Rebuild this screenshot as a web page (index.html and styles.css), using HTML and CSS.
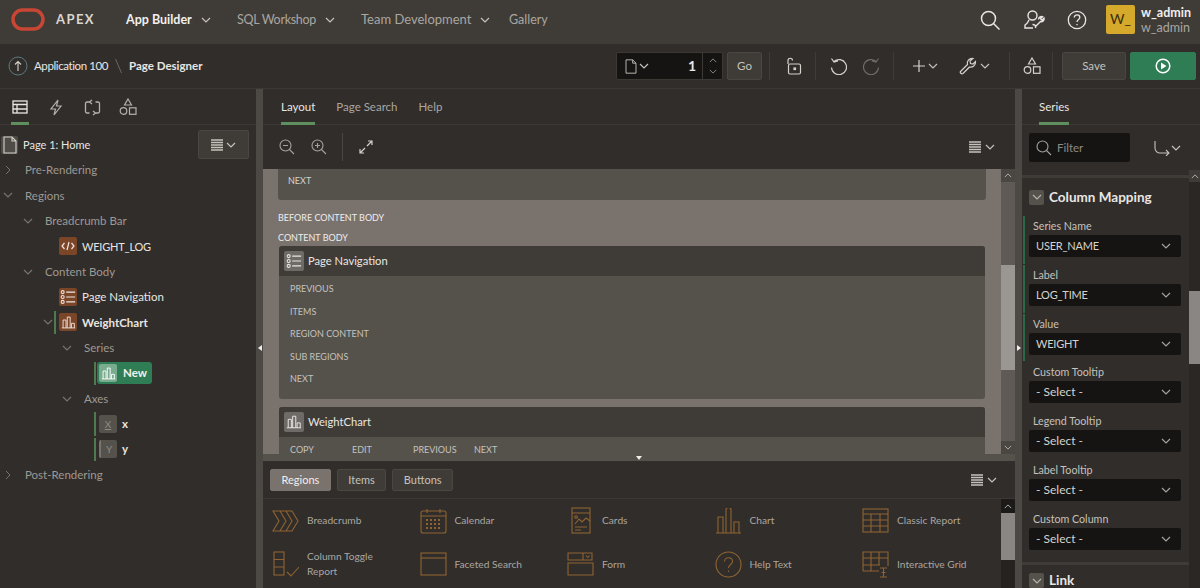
FILE: index.html
```html
<!DOCTYPE html>
<html lang="en">
<head>
<meta charset="utf-8">
<title>Page Designer</title>
<link rel="stylesheet" href="styles.css">
</head>
<body>
<svg class="defs" width="0" height="0">
  <symbol id="chev" viewBox="0 0 10 6"><path d="M1 1l4 4 4-4" fill="none" stroke="currentColor" stroke-width="1.2"/></symbol>
  <symbol id="menu" viewBox="0 0 12 12"><path d="M0 1h12M0 3.500h12M0 6h12M0 8.500h12M0 11h12" fill="none" stroke="currentColor" stroke-width="1.3"/></symbol>
  <symbol id="shapes" viewBox="0 0 18 18" fill="none" stroke="currentColor" stroke-width="1.2"><path d="M9 1l3.500 6h-7z"/><circle cx="4.500" cy="13" r="3.300"/><rect x="10.500" y="9.800" width="6.500" height="6.500"/></symbol>
  <symbol id="bars" viewBox="0 0 18 18" fill="none" stroke="currentColor" stroke-width="1.1"><path d="M1 15.500h16M2.500 15.500V6h3.500v9.500M7.500 15.500V2.500h3.500v13M12.500 15.500V10h3.500v5.500"/></symbol>
  <symbol id="list" viewBox="0 0 18 18" fill="none" stroke="currentColor" stroke-width="1.2"><circle cx="3" cy="3.500" r="1.700"/><circle cx="3" cy="9" r="1.700"/><circle cx="3" cy="14.500" r="1.700"/><path d="M7 3.500h10M7 9h10M7 14.500h10"/></symbol>
  <symbol id="doc" viewBox="0 0 14 18" fill="none" stroke="currentColor" stroke-width="1.1"><path d="M1 1h8l4 4v12H1zM9 1v4h4"/></symbol>
</svg>

<header class="topbar">
  <svg class="logo" width="34" height="23" viewBox="0 0 34 23"><rect x="2" y="2" width="30" height="19" rx="9.500" fill="none" stroke="#c74634" stroke-width="3.500"/></svg>
  <span class="brand">APEX</span>
  <nav class="mainnav">
    <a class="nav-item nav-active nav-app">App Builder<svg class="chev" width="10" height="6"><use href="#chev"/></svg></a>
    <a class="nav-item nav-sql">SQL Workshop<svg class="chev" width="10" height="6"><use href="#chev"/></svg></a>
    <a class="nav-item nav-team">Team Development<svg class="chev" width="10" height="6"><use href="#chev"/></svg></a>
    <a class="nav-item">Gallery</a>
  </nav>
  <div class="top-actions">
    <svg width="22" height="22" viewBox="0 0 22 22" fill="none" stroke="#e8e6e3" stroke-width="1.500"><circle cx="9.500" cy="9.500" r="7"/><path d="M14.500 14.500l6 6"/></svg>
    <svg width="22" height="22" viewBox="0 0 22 22" fill="none" stroke="#e8e6e3" stroke-width="1.400"><circle cx="9.500" cy="6.500" r="4.500"/><path d="M6 11c-1 1.500-1 3-4 5v3h8M12 18l6-6M15.500 10.500c0-2 2-3.500 4-2.800l-2 2 1.500 1.500 2-2c.5 2-1.500 4-3.500 3.500M9.500 15.500c2 0 3.500 1 3 3.500"/></svg>
    <svg width="20" height="20" viewBox="0 0 20 20" fill="none" stroke="#e8e6e3" stroke-width="1.300"><circle cx="10" cy="10" r="8.700"/><path d="M7.300 7.500c0-3.500 5.500-3.500 5.500 0 0 2-2.800 2-2.800 4.500M10 14v1.300"/></svg>
  </div>
  <div class="avatar">W_</div>
  <div class="user"><b>w_admin</b><span>w_admin</span></div>
</header>

<div class="toolbar">
  <svg class="up" width="20" height="20" viewBox="0 0 20 20" fill="none"><circle cx="10" cy="10" r="9" stroke="#5d7a80"/><path d="M10 15V6M7 8.500L10 5.500l3 3" stroke="#d5d2cc" stroke-width="1.100"/></svg>
  <span class="crumb">Application 100</span>
  <svg class="crumb-sep" width="7" height="16"><path d="M0.500 1l6 14" stroke="#6c6864"/></svg>
  <b class="crumb-cur">Page Designer</b>
  <div class="page-box">
    <svg class="pg-doc" width="12" height="15"><use href="#doc"/></svg>
    <svg class="chev" width="10" height="6"><use href="#chev"/></svg>
    <span class="pg-num">1</span>
    <div class="stepper">
      <svg width="8" height="5" class="flip"><use href="#chev"/></svg>
      <svg width="8" height="5"><use href="#chev"/></svg>
    </div>
  </div>
  <button class="btn btn-go">Go</button>
  <i class="vsep sep-a"></i>
  <svg class="t-lock" width="18" height="18" viewBox="0 0 18 18" fill="none" stroke="#d5d2cc" stroke-width="1.200"><rect x="4.500" y="7" width="12" height="10" rx="1.500"/><path d="M4 7V3.500c0-3 4.500-3 4.500 0"/><rect x="10" y="11" width="1.500" height="1.500" fill="#d5d2cc"/></svg>
  <i class="vsep sep-b"></i>
  <svg class="t-undo" width="17" height="18" viewBox="0 0 17 18" fill="none" stroke="#d5d2cc" stroke-width="1.200"><path d="M4 4.500a7.500 7.500 0 1 1-2.500 6M1.500 1.500l2.500 3.500 4-1"/></svg>
  <svg class="t-redo" width="17" height="18" viewBox="0 0 17 18" fill="none" stroke="#6f6b66" stroke-width="1.200"><path d="M13 4.500a7.500 7.500 0 1 0 2.500 6M15.500 1.500L13 5 9 4"/></svg>
  <i class="vsep sep-c"></i>
  <svg class="t-plus" width="12" height="12"><path d="M6 0v12M0 6h12" stroke="#d5d2cc" stroke-width="1.200"/></svg>
  <svg class="chev" width="10" height="6"><use href="#chev"/></svg>
  <svg class="t-wrench" width="18" height="18" viewBox="0 0 18 18" fill="none" stroke="#d5d2cc" stroke-width="1.200"><path d="M1.500 14.500l7-7c-1-3 1.500-6.500 5.500-6l-3 2.500.5 2.500 2.500.5 2.500-2.500c.5 4-3 6-6 5.500l-6.500 6.500c-1.500 1-3.500-1-2.500-2z"/></svg>
  <svg class="chev" width="10" height="6"><use href="#chev"/></svg>
  <i class="vsep sep-d"></i>
  <svg class="t-shapes" width="18" height="18" color="#d5d2cc"><use href="#shapes"/></svg>
  <i class="vsep sep-e"></i>
  <button class="btn btn-save">Save</button>
  <button class="btn btn-run"><svg width="16" height="16" viewBox="0 0 16 16"><circle cx="8" cy="8" r="6.800" fill="none" stroke="#fff" stroke-width="1.500"/><path d="M6 4.500l5.500 3.500L6 11.500z" fill="#fff"/></svg></button>
</div>

<main class="workspace">
  <aside class="left">
    <div class="tabs left-tabs">
      <span class="icon-tab active"><svg width="18" height="16" viewBox="0 0 18 16" fill="none" stroke="#e8e6e3" stroke-width="1.300"><rect x="2" y="2" width="14" height="12"/><path d="M2 5.500h14M2 10h14M6 5.500V14"/></svg></span>
      <span class="icon-tab"><svg width="14" height="17" viewBox="0 0 14 17" fill="none" stroke="#b5b1ac" stroke-width="1.200"><path d="M9 1L2 10h4.500L5 16l7-9H7.500z"/></svg></span>
      <span class="icon-tab"><svg width="17" height="17" viewBox="0 0 17 17" fill="none" stroke="#b5b1ac" stroke-width="1.300"><path d="M5.500 14H3a1.500 1.500 0 0 1-1.500-1.500v-8A1.500 1.500 0 0 1 3 3h3M11.500 3H14a1.500 1.500 0 0 1 1.500 1.500v8A1.500 1.500 0 0 1 14 14h-3M8 1l-2.500 2L8 5M9 12l2.500 2L9 16"/></svg></span>
      <span class="icon-tab"><svg width="18" height="18" color="#b5b1ac"><use href="#shapes"/></svg></span>
    </div>
    <div class="tree">
      <div class="row row-page"><span class="pg-ico"><svg width="14" height="18" color="#d5d2cc"><use href="#doc"/></svg></span><span class="t-root">Page 1: Home</span>
        <button class="btn menu-btn"><svg width="12" height="12"><use href="#menu"/></svg><svg class="chev" width="10" height="6"><use href="#chev"/></svg></button></div>
      <div class="row l0"><svg class="tog" width="6" height="10" viewBox="0 0 6 10"><path d="M1 1l4 4-4 4" fill="none" stroke="currentColor"/></svg><span>Pre-Rendering</span></div>
      <div class="row l0"><svg class="tog" width="10" height="6"><use href="#chev"/></svg><span>Regions</span></div>
      <div class="row l1"><svg class="tog" width="10" height="6"><use href="#chev"/></svg><span>Breadcrumb Bar</span></div>
      <div class="row l2"><span class="node"><svg width="14" height="10" viewBox="0 0 14 10" fill="none" stroke="#f0e6df" stroke-width="1.200"><path d="M3.500 2L1 5l2.500 3M10.500 2L13 5l-2.500 3M8 1L6 9"/></svg></span><span class="lit caps">WEIGHT_LOG</span></div>
      <div class="row l1"><svg class="tog" width="10" height="6"><use href="#chev"/></svg><span>Content Body</span></div>
      <div class="row l2"><span class="node"><svg width="16" height="16" color="#f0e6df"><use href="#list"/></svg></span><span class="lit">Page Navigation</span></div>
      <div class="row l2 mark-a"><i class="mark"></i><svg class="tog" width="10" height="6"><use href="#chev"/></svg><span class="node"><svg width="15" height="15" color="#f0e6df"><use href="#bars"/></svg></span><b class="lit">WeightChart</b></div>
      <div class="row l3"><svg class="tog" width="10" height="6"><use href="#chev"/></svg><span>Series</span></div>
      <div class="row l4"><i class="mark"></i><span class="pill"><span class="node node-new"><svg width="15" height="15" color="#fff"><use href="#bars"/></svg></span><b>New</b></span></div>
      <div class="row l3"><svg class="tog" width="10" height="6"><use href="#chev"/></svg><span>Axes</span></div>
      <div class="row l4"><i class="mark"></i><span class="node node-grey axis-x">X</span><b class="lit">x</b></div>
      <div class="row l4"><i class="mark"></i><span class="node node-grey axis-y">Y</span><b class="lit">y</b></div>
      <div class="row l0"><svg class="tog" width="6" height="10" viewBox="0 0 6 10"><path d="M1 1l4 4-4 4" fill="none" stroke="currentColor"/></svg><span>Post-Rendering</span></div>
    </div>
  </aside>
  <div class="split"><i class="arrow-l"></i></div>

  <section class="center">
    <div class="tabs center-tabs">
      <span class="tab active">Layout</span><span class="tab">Page Search</span><span class="tab">Help</span>
    </div>
    <div class="center-tools">
      <svg width="16" height="16" viewBox="0 0 16 16" fill="none" stroke="#a5a19c" stroke-width="1.100"><circle cx="6.500" cy="6.500" r="5.500"/><path d="M10.500 10.500L15 15M4 6.500h5"/></svg>
      <svg class="zoom-in" width="16" height="16" viewBox="0 0 16 16" fill="none" stroke="#a5a19c" stroke-width="1.100"><circle cx="6.500" cy="6.500" r="5.500"/><path d="M10.500 10.500L15 15M4 6.500h5M6.500 4v5"/></svg>
      <i class="tool-sep"></i>
      <svg width="14" height="14" viewBox="0 0 14 14" fill="none" stroke="#d5d2cc" stroke-width="1.200"><path d="M8 6l5-5M9 1h4v4M6 8l-5 5M1 9v4h4"/></svg>
      <span class="menu-ico"><svg width="12" height="12"><use href="#menu"/></svg><svg class="chev" width="10" height="6"><use href="#chev"/></svg></span>
    </div>
    <div class="canvas-wrap">
      <div class="canvas">
        <div class="reg reg-top"><p class="slot">NEXT</p></div>
        <p class="slot-label">BEFORE CONTENT BODY</p>
        <p class="slot-label">CONTENT BODY</p>
        <div class="reg reg-nav">
          <div class="reg-head"><span class="reg-ico"><svg width="16" height="16" color="#e8e6e3"><use href="#list"/></svg></span>Page Navigation</div>
          <div class="reg-body">
            <p class="s1">PREVIOUS</p><p>ITEMS</p><p>REGION CONTENT</p><p>SUB REGIONS</p><p>NEXT</p>
          </div>
        </div>
        <div class="reg reg-chart">
          <div class="reg-head"><span class="reg-ico"><svg width="16" height="16" color="#e8e6e3"><use href="#bars"/></svg></span>WeightChart</div>
          <div class="reg-buttons"><span class="b1">COPY</span><span class="b2">EDIT</span><span class="b3">PREVIOUS</span><span>NEXT</span></div>
        </div>
      </div>
      <div class="vbar vbar-canvas">
        <span class="vbtn"><svg class="flip" width="8" height="5"><use href="#chev"/></svg></span>
        <span class="vthumb"></span>
        <span class="vfill"></span>
        <span class="vbtn"><svg width="8" height="5"><use href="#chev"/></svg></span>
      </div>
    </div>
    <div class="hsplit"><i class="arrow-d"></i></div>
    <div class="gallery">
      <div class="gal-tabs">
        <button class="gbtn on">Regions</button><button class="gbtn">Items</button><button class="gbtn">Buttons</button>
        <span class="menu-ico"><svg width="12" height="12"><use href="#menu"/></svg><svg class="chev" width="10" height="6"><use href="#chev"/></svg></span>
      </div>
      <div class="gal-body">
        <div class="gal-grid">
          <div class="gi"><svg width="27" height="24" viewBox="0 0 27 24" class="gi-ico"><path d="M1 2h19l6 10-6 10H1l6-10zM8 2l6 10-6 10M14 2l6 10-6 10"/></svg><span>Breadcrumb</span></div>
          <div class="gi"><svg width="27" height="26" viewBox="0 0 27 26" class="gi-ico"><rect x="1" y="3" width="25" height="22" rx="2"/><path d="M1 8h25M7 1v4M20 1v4"/><path class="dots" d="M6 12h15M6 16h15M6 20h15"/></svg><span>Calendar</span></div>
          <div class="gi"><svg width="27" height="27" viewBox="0 0 27 27" class="gi-ico"><rect x="5" y="1" width="18" height="25"/><path d="M5 6h18M8 17l4-5 3 3 4-4 4 3M8 20h12M8 23h6"/><circle cx="9" cy="10" r="1.300"/></svg><span>Cards</span></div>
          <div class="gi"><svg width="27" height="26" viewBox="0 0 27 26" class="gi-ico"><path d="M1 25h25M3 25V9h5v16M11 25V2a2 2 0 0 1 5 0v23M19 25V14h5v11"/></svg><span>Chart</span></div>
          <div class="gi"><svg width="27" height="25" viewBox="0 0 27 25" class="gi-ico"><rect x="1" y="1" width="25" height="23"/><path d="M1 6h25M1 12h25M1 18h25M9 6v18M18 6v18"/></svg><span>Classic Report</span></div>
          <div class="gi"><svg width="27" height="26" viewBox="0 0 27 26" class="gi-ico"><rect x="2" y="1" width="10" height="23"/><path d="M2 8.500h10M2 16h10M15 21l4 4 8-9"/></svg><span>Column Toggle Report</span></div>
          <div class="gi"><svg width="27" height="24" viewBox="0 0 27 24" class="gi-ico"><rect x="1" y="1" width="25" height="22"/><path d="M1 6h25"/></svg><span>Faceted Search</span></div>
          <div class="gi"><svg width="27" height="24" viewBox="0 0 27 24" class="gi-ico"><path d="M1 1h15v7H1zM16 1h9v7h-9zM1 11h25v12H1zM19 3.500l1.800 2 1.800-2"/></svg><span>Form</span></div>
          <div class="gi"><svg width="27" height="27" viewBox="0 0 27 27" class="gi-ico"><circle cx="13.500" cy="13.500" r="12.500"/><path d="M9.500 10.500c0-5 8-5 8 0 0 3-4 3-4 6.500M13.500 19.500v1.500"/></svg><span>Help Text</span></div>
          <div class="gi"><svg width="27" height="27" viewBox="0 0 27 27" class="gi-ico"><path d="M1 20V1h25v14M1 7h25M1 14h17M1 20h16M9 1v19M17 1v13M18 17h7M18 26h7M21.500 17v9M19.500 21.500h4"/></svg><span>Interactive Grid</span></div>
        </div>
        <div class="vbar vbar-gal">
          <span class="vbtn"><svg class="flip" width="8" height="5"><use href="#chev"/></svg></span>
          <span class="vthumb"></span>
        </div>
      </div>
    </div>
  </section>
  <div class="split split-r"><i class="arrow-r"></i></div>

  <aside class="right">
    <div class="tabs right-tabs"><span class="tab active">Series</span></div>
    <div class="right-tools">
      <div class="filter"><svg width="16" height="16" viewBox="0 0 16 16" fill="none" stroke="#a5a19c" stroke-width="1.100"><circle cx="6.500" cy="6.500" r="5.500"/><path d="M10.500 10.500L15 15"/></svg><span>Filter</span></div>
      <span class="goto"><svg width="16" height="16" viewBox="0 0 16 16" fill="none" stroke="#c5c1bc" stroke-width="1.100"><path d="M1 1v7a5 5 0 0 0 5 5h9M12 10l3 3-3 3"/></svg><svg class="chev" width="10" height="6"><use href="#chev"/></svg></span>
    </div>
    <div class="props-wrap">
      <div class="props">
        <div class="group-head"><span class="collapse"><svg width="10" height="6"><use href="#chev"/></svg></span>Column Mapping</div>
        <div class="field req"><label>Series Name</label><div class="sel"><span class="caps">USER_NAME</span><svg width="10" height="6"><use href="#chev"/></svg></div></div>
        <div class="field req"><label>Label</label><div class="sel"><span class="caps">LOG_TIME</span><svg width="10" height="6"><use href="#chev"/></svg></div></div>
        <div class="field req"><label>Value</label><div class="sel"><span class="caps">WEIGHT</span><svg width="10" height="6"><use href="#chev"/></svg></div></div>
        <div class="field"><label>Custom Tooltip</label><div class="sel">- Select -<svg width="10" height="6"><use href="#chev"/></svg></div></div>
        <div class="field"><label>Legend Tooltip</label><div class="sel">- Select -<svg width="10" height="6"><use href="#chev"/></svg></div></div>
        <div class="field"><label>Label Tooltip</label><div class="sel">- Select -<svg width="10" height="6"><use href="#chev"/></svg></div></div>
        <div class="field"><label>Custom Column</label><div class="sel">- Select -<svg width="10" height="6"><use href="#chev"/></svg></div></div>
        <div class="group-head group-link"><span class="collapse"><svg width="10" height="6"><use href="#chev"/></svg></span>Link</div>
      </div>
      <div class="vbar vbar-props">
        <span class="vbtn"><svg class="flip" width="8" height="5"><use href="#chev"/></svg></span>
        <span class="vthumb"></span>
      </div>
    </div>
  </aside>
</main>
</body>
</html>
```

FILE: styles.css
```css
* { box-sizing: border-box; }
html, body { margin: 0; height: 100%; overflow: hidden; }
body {
  display: flex; flex-direction: column; height: 588px;
  background: #312d2a; color: #d5d2cc;
  font: 11.500px/1.2 Lato, "Noto Sans", sans-serif;
}
p { margin: 0; }
i { display: block; font-style: normal; }
button { font: inherit; cursor: default; }
.defs { position: absolute; }
.flip { transform: scaleY(-1); }
.chev { color: #c5c1bc; flex: none; }
.caps { font-size: 11px; letter-spacing: -.2px; }

/* top bar */
.topbar { height: 44px; flex: none; display: flex; align-items: center; background: #3f3c37; padding: 0 0 5px 11px; }
.logo { flex: none; }
.brand { margin-left: 11px; width: 70px; font-size: 13px; font-weight: 700; letter-spacing: 1.4px; color: #d9d6d2; }
.mainnav { display: flex; font-size: 12.500px; color: #aaa6a1; }
.nav-item { display: flex; align-items: center; gap: 9px; white-space: nowrap; }
.nav-app { width: 111px; }
.nav-sql { width: 124px; letter-spacing: -.3px; }
.nav-team { width: 148px; font-size: 13px; }
.nav-active { color: #f2f0ee; font-weight: 700; }
.top-actions { margin-left: auto; display: flex; align-items: center; gap: 22px; }
.avatar { width: 29px; height: 29px; flex: none; margin-left: 19px; background: #d4a92c; color: #3a2c08; border-radius: 2px; font-size: 14px; display: flex; align-items: center; justify-content: center; }
.user { width: 59px; flex: none; margin-left: 6px; display: flex; flex-direction: column; font-size: 12.500px; line-height: 15px; }
.user b { color: #f0eeec; }
.user span { color: #aaa6a1; }

/* toolbar */
.toolbar { height: 45px; flex: none; display: flex; align-items: center; padding: 0 4px 0 8px; background: #312d2a; border-bottom: 1px solid #3c3935; white-space: nowrap; }
.toolbar > * { flex: none; }
.crumb { margin-left: 6px; color: #e8e6e3; letter-spacing: -.4px; }
.crumb-sep { margin-left: 7px; }
.crumb-cur { margin-left: 7px; color: #e8e6e3; font-size: 11.500px; }
.page-box { margin-left: auto; width: 107px; height: 28px; background: #161412; border: 1px solid #3c3935; border-radius: 2px; display: flex; align-items: center; padding-left: 8px; }
.pg-doc { color: #c5c1bc; margin-right: 2px; }
.pg-num { margin-left: auto; margin-right: 6px; font-size: 14px; color: #e8e6e3; font-weight: 700; }
.stepper { width: 20px; height: 100%; border-left: 1px solid #3c3935; display: flex; flex-direction: column; align-items: center; justify-content: center; gap: 6px; color: #8d8984; }
.btn { background: #3f3c37; border: 1px solid #4a4742; border-radius: 2px; color: #c5c1bc; height: 28px; padding: 0; font-size: 11.500px; }
.btn-go { width: 35px; margin-left: 4px; }
.vsep { width: 1px; height: 28px; background: #3f3c37; }
.sep-a { margin-left: 7px; }
.t-lock { margin-left: 14px; }
.sep-b { margin-left: 13px; }
.t-undo { margin-left: 14px; }
.t-redo { margin-left: 16px; }
.sep-c { margin-left: 13px; }
.t-plus { margin-left: 19px; }
.t-plus + .chev { margin-left: 3px; }
.t-wrench { margin-left: 21px; }
.t-wrench + .chev { margin-left: 3px; }
.sep-d { margin-left: 19px; }
.t-shapes { margin-left: 13px; }
.sep-e { margin-left: 11px; }
.btn-save { width: 64px; margin-left: 9px; }
.btn-run { width: 66px; margin-left: 4px; background: #2f7d55; border-color: #2f7d55; display: flex; align-items: center; justify-content: center; }

/* layout */
.workspace { flex: 1; min-height: 0; display: flex; }
.left { width: 256px; flex: none; display: flex; flex-direction: column; }
.split { width: 7px; flex: none; background: #4c4944; display: flex; align-items: center; justify-content: center; padding-top: 19px; }
.arrow-l { border: 3px solid transparent; border-left: 0; border-right: 4px solid #f0eeec; }
.arrow-r { border: 3px solid transparent; border-right: 0; border-left: 4px solid #f0eeec; }
.center { width: 752px; flex: none; display: flex; flex-direction: column; min-height: 0; }
.right { flex: 1; min-width: 0; display: flex; flex-direction: column; }

/* tabs */
.tabs { height: 36px; flex: none; display: flex; border-bottom: 1px solid #3c3935; }
.left-tabs { gap: 18px; padding-left: 11px; }
.icon-tab { width: 18px; height: 36px; display: flex; align-items: center; justify-content: center; }
.icon-tab.active { border-bottom: 3px solid #5f8f5f; padding-top: 3px; }
.center-tabs { gap: 21px; padding-left: 18px; }
.right-tabs { padding-left: 17px; }
.tab { height: 36px; display: flex; align-items: center; color: #aaa6a1; }
.tab.active { color: #e8e6e3; border-bottom: 3px solid #5f8f5f; padding-top: 3px; }

/* tree */
.tree { padding-top: 7px; color: #9d9994; }
.row { height: 25.400px; display: flex; align-items: center; position: relative; white-space: nowrap; }
.row-page { padding-left: 1px; }
.pg-ico { width: 17px; height: 18px; background: #4f4c47; border-radius: 2px; display: flex; justify-content: center; align-items: center; }
.t-root { margin-left: 5px; color: #e8e6e3; font-size: 11px; }
.menu-btn { margin-left: auto; margin-right: 7px; width: 51px; display: flex; align-items: center; justify-content: center; gap: 3px; height: 29px; color: #c5c1bc; }
.tog { flex: none; color: #77736e; }
.l0 { padding-left: 3px; }
.l0 .tog { width: 10px; }
.l0 > span { margin-left: 12px; }
.l1 { padding-left: 23px; }
.l1 > span { margin-left: 12px; }
.l2 { padding-left: 59px; }
.l3 { padding-left: 62px; }
.l3 > span { margin-left: 12px; }
.l4 { padding-left: 99px; }
.mark-a .tog { position: absolute; left: 43px; }
.mark { position: absolute; top: 1px; bottom: 1px; left: 94px; width: 2px; background: #4f7a4f; }
.mark-a .mark { left: 54px; }
.node { width: 18px; height: 18px; flex: none; border-radius: 2px; background: #7b4528; display: flex; align-items: center; justify-content: center; }
.lit { margin-left: 5px; color: #e8e6e3; }
.pill { margin-left: -2px; height: 22px; width: 55px; background: #2f7d55; border-radius: 3px; display: flex; align-items: center; padding-left: 2px; color: #f2f0ee; }
.pill b { margin-left: 6px; }
.node-new { background: #79ab8f; }
.node-grey { background: #55524c; color: #8d8984; font-size: 10px; }
.axis-x { text-decoration: underline; }
.axis-y { border-left: 2px solid #77736e; }

/* center */
.center-tools { height: 44px; flex: none; display: flex; align-items: center; padding: 0 20px 0 16px; }
.zoom-in { margin-left: 16px; }
.tool-sep { width: 1px; height: 28px; background: #4a4742; margin: 0 16px 0 15px; }
.menu-ico { margin-left: auto; display: flex; align-items: center; gap: 4px; color: #c5c1bc; }
.canvas-wrap { flex: 1; min-height: 0; display: flex; }
.canvas { width: 738px; flex: none; background: #7a726c; overflow: hidden; padding-left: 15px; font-size: 9px; }
.slot { padding: 6px 0 0 10px; color: #d5d2cc; line-height: 12px; }
.reg { width: 708px; background: #55524c; border-radius: 0 0 3px 3px; }
.reg-top { height: 31px; margin-bottom: 11px; }
.slot-label { height: 20px; padding-top: 1px; line-height: 12px; color: #eee; }
.reg-nav, .reg-chart { width: 706px; margin-left: 1px; border-radius: 3px; }
.reg-nav { margin-top: -5px; height: 153px; margin-bottom: 8px; }
.reg-head { height: 30px; background: #3f3c37; border-radius: 3px 3px 0 0; display: flex; align-items: center; padding-left: 5px; font-size: 11.200px; color: #e8e6e3; }
.reg-ico { width: 20px; height: 20px; background: #6e6a65; border-radius: 2px; margin-right: 4px; display: flex; align-items: center; justify-content: center; }
.reg-body { padding-left: 11px; color: #c5c1bc; }
.reg-body p { height: 22.500px; line-height: 12px; }
.s1 { margin-top: 7px; }
.reg-buttons { display: flex; padding: 8px 0 0 11px; height: 30px; color: #c5c1bc; }
.b1 { width: 62px; }
.b2 { width: 61px; }
.b3 { width: 61px; }
.vbar { width: 14px; flex: none; display: flex; flex-direction: column; }
.vbar-canvas { background: #5f5a55; }
.vbtn { height: 13px; flex: none; background: #4a4742; color: #b5b1ac; display: flex; align-items: center; justify-content: center; }
.vthumb { background: #9a9692; flex: none; }
.vbar-canvas .vthumb { height: 105px; margin-top: 83px; }
.vfill { flex: 1; }
.hsplit { height: 7px; flex: none; background: #55524c; position: relative; }
.arrow-d { position: absolute; left: 373px; top: 2px; border: 3px solid transparent; border-bottom: 0; border-top: 4px solid #f0eeec; }

/* gallery */
.gallery { height: 127px; flex: none; display: flex; flex-direction: column; }
.gal-tabs { height: 38px; flex: none; display: flex; align-items: center; padding: 0 18px 0 7px; gap: 6px; border-bottom: 1px solid #3c3935; }
.gbtn { height: 22px; padding: 0 10.500px; font-size: 11px; background: #3f3c37; border: 1px solid #4a4742; border-radius: 2px; color: #c5c1bc; }
.gbtn.on { background: #7a726c; color: #f2f0ee; border-color: #7a726c; }
.gal-body { flex: 1; min-height: 0; display: flex; }
.gal-grid { width: 738px; flex: none; overflow: hidden; display: grid; grid-template-columns: repeat(5, 147.500px); grid-auto-rows: 43.500px; padding: 0 0 0 9px; font-size: 10.200px; color: #aaa6a1; }
.gi { display: flex; align-items: center; gap: 8px; }
.gi span { max-width: 88px; line-height: 15px; }
.gi-ico { flex: none; fill: none; stroke: #8f6432; stroke-width: 1.100; }
.gi-ico .dots { stroke-dasharray: 2 2; stroke-width: 2; }
.vbar-gal { background: #25221f; }
.vbar-gal .vbtn { background: #1c1a18; height: 14px; }
.vbar-gal .vthumb { height: 47px; background: #8a8683; }

/* right */
.right-tools { height: 45px; flex: none; display: flex; align-items: center; padding-left: 7px; }
.filter { width: 101px; height: 29px; background: #161412; border-radius: 2px; display: flex; align-items: center; padding-left: 7px; gap: 5px; color: #8d8984; }
.goto { display: flex; align-items: center; gap: 1px; margin-left: 24px; }
.props-wrap { flex: 1; min-height: 0; display: flex; }
.props { width: 167px; flex: none; overflow: hidden; padding-top: 5px; }
.group-head { display: flex; align-items: center; height: 41px; padding-left: 7px; border-top: 3px solid #3f3c37; font-size: 13.500px; font-weight: 700; color: #e8e6e3; }
.collapse { width: 15px; height: 15px; background: #55524c; border-radius: 2px; margin-right: 5px; display: flex; align-items: center; justify-content: center; color: #b5b1ac; }
.field { height: 48.800px; padding: 3px 8px 0 7px; position: relative; display: flex; flex-direction: column; }
.field.req::before { content: ""; position: absolute; left: 1px; top: 0; bottom: 1px; width: 2px; background: #2a6a49; }
.field label { padding-left: 4px; font-size: 10.700px; line-height: 14px; color: #c5c1bc; }
.sel { margin-top: 2px; height: 22px; background: #161412; border-radius: 2px; display: flex; align-items: center; justify-content: space-between; padding: 0 10px 0 7px; font-size: 12px; color: #d5d2cc; }
.sel svg { color: #a5a19c; }
.group-link { height: 35px; margin-top: 4px; }
.vbar-props { width: 11px; background: #2a2724; }
.vbar-props .vbtn { height: 12px; background: #3f3c37; }
.vbar-props .vthumb { height: 73px; margin-top: 109px; background: #8a8683; }
```
